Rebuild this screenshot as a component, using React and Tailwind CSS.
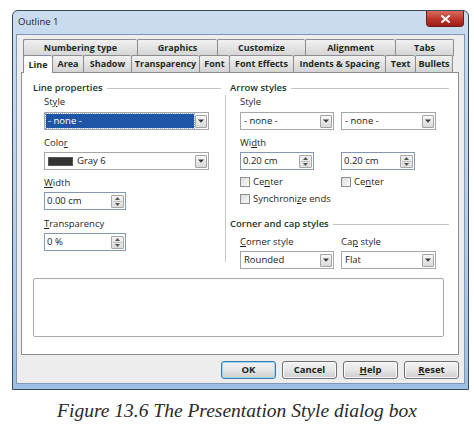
import React from "react";

const UI = "font-['Open_Sans','Noto_Sans',sans-serif]";

function Arrow() {
  return (
    <svg width="6" height="4" viewBox="0 0 6 4">
      <path d="M0 0.5h6L3 3.8z" fill="#3a3a3a" />
    </svg>
  );
}

function DropBtn() {
  return (
    <div className="w-[12px] h-[13px] border border-[#a3a3a3] rounded-[1px] bg-linear-to-b from-[#f7f7f7] to-[#d9d9d9] flex items-center justify-center shrink-0">
      <Arrow />
    </div>
  );
}

function Select({ w, children, highlight }) {
  return (
    <div className={`${w} h-[18px] border border-[#a7a7a7] bg-white flex items-center pl-[1px] pr-[1px] gap-[1px]`}>
      <div
        className={`flex-1 h-[14px] flex items-center gap-[4px] text-[9.5px] leading-none pl-[2px] ${
          highlight ? "bg-[#1f55a6] text-white outline outline-dotted outline-[#8fb0e0]" : "text-[#1a1a1a]"
        }`}
      >
        {children}
      </div>
      <DropBtn />
    </div>
  );
}

function Spin({ w, value }) {
  return (
    <div className={`${w} h-[18px] border border-[#8497b3] bg-white flex items-center pl-[2px] pr-[1px]`}>
      <span className="flex-1 text-[9.5px] leading-none text-[#1a1a1a]">{value}</span>
      <div className="w-[13px] h-[13px] border border-[#a8a8a8] rounded-[1px] bg-linear-to-b from-[#f3f3f3] to-[#dcdcdc] flex flex-col items-center justify-center gap-[1px] shrink-0">
        <svg width="5" height="3" viewBox="0 0 5 3">
          <path d="M0 3h5L2.5 0z" fill="#555" />
        </svg>
        <div className="w-[9px] h-px bg-[#c0c0c0]" />
        <svg width="5" height="3" viewBox="0 0 5 3">
          <path d="M0 0h5L2.5 3z" fill="#555" />
        </svg>
      </div>
    </div>
  );
}

function Label({ children, className = "" }) {
  return (
    <div className={`h-[13px] text-[9.5px] leading-[13px] text-[#1f1f1f] whitespace-nowrap ${className}`}>{children}</div>
  );
}

function Heading({ children, className = "" }) {
  return (
    <div className={`h-[14px] flex items-center ${className}`}>
      <span className="text-[9.5px] font-semibold text-[#22361f] whitespace-nowrap leading-none">{children}</span>
      <div className="flex-1 h-px bg-[#c4c4c4] ml-[4px]" />
    </div>
  );
}

function Check({ children, className = "" }) {
  return (
    <div className={`h-[14px] flex items-center gap-[3px] ${className}`}>
      <div className="w-[10px] h-[10px] border border-[#8e8f8f] bg-linear-to-br from-[#dcdcdc] to-[#fbfbfb]" />
      <span className="text-[9.5px] leading-none text-[#1f1f1f]">{children}</span>
    </div>
  );
}

function Tab({ w, children, selected, last }) {
  return (
    <div
      className={`${w} flex items-center justify-center border-t border-l border-[#8b8d92] rounded-t-[2px] text-[9px] font-bold text-[#1e2b1e] whitespace-nowrap ${
        last ? "border-r" : ""
      } ${selected ? "bg-white h-[18px] relative z-10" : "bg-linear-to-b from-[#f1f1f1] to-[#d4d4d4] h-[17px]"}`}
    >
      {children}
    </div>
  );
}

function Btn({ children, focused }) {
  return (
    <div
      className={`w-[55px] h-[18px] rounded-[3px] border flex items-center justify-center text-[9.5px] font-bold text-[#1e1e1e] bg-linear-to-b from-[#f3f3f3] via-[#e6e6e6] to-[#cdcdcd] ${
        focused ? "border-[#3a7cb0] shadow-[inset_0_0_0_1px_#9fd3f2]" : "border-[#707070] shadow-[inset_0_0_0_1px_#fbfbfb]"
      }`}
    >
      {children}
    </div>
  );
}

export default function App() {
  return (
    <div className={`w-[474px] h-[430px] bg-white ${UI} overflow-hidden`}>
      <div className="pt-[10px] pl-[12px]">
        <div className="w-[457px] h-[380px] border border-[#3a4a5e] rounded-t-[6px] bg-linear-to-b from-[#cadcee] via-[#b9d0e9] to-[#9fc0e3] flex flex-col">
          {/* title bar */}
          <div className="h-[23px] flex items-start justify-between">
            <span className="pl-[5px] pt-[4px] text-[9.5px] text-[#1b1b1b] leading-[13px]">Outline 1</span>
            <div className="mr-[4px] w-[38px] h-[16px] rounded-b-[4px] border border-t-0 border-[#6b1d18] bg-linear-to-b from-[#d86b5f] via-[#c0392e] to-[#9e1c14] flex items-center justify-center">
              <svg width="9" height="8" viewBox="0 0 9 8">
                <path d="M1 1l7 6M8 1l-7 6" stroke="#fff" strokeWidth="2" strokeLinecap="square" />
              </svg>
            </div>
          </div>
          {/* body */}
          <div className="flex-1 mx-[3px] mb-[5px] border border-[#7f98b6] bg-[#ededed] flex flex-col pl-[4px] pr-[5px] pt-[4px]">
            {/* tab rows */}
            <div className="flex pl-[2px] h-[16px]">
              <Tab w="w-[114px]">Numbering type</Tab>
              <Tab w="w-[80px]">Graphics</Tab>
              <Tab w="w-[88px]">Customize</Tab>
              <Tab w="w-[90px]">Alignment</Tab>
              <Tab w="w-[59px]" last>Tabs</Tab>
            </div>
            <div className="flex pl-[2px] h-[17px] items-start">
              <Tab w="w-[29px]" selected>Line</Tab>
              <Tab w="w-[31px]">Area</Tab>
              <Tab w="w-[48px]">Shadow</Tab>
              <Tab w="w-[68px]">Transparency</Tab>
              <Tab w="w-[30px]">Font</Tab>
              <Tab w="w-[64px]">Font Effects</Tab>
              <Tab w="w-[92px]">Indents &amp; Spacing</Tab>
              <Tab w="w-[30px]">Text</Tab>
              <Tab w="w-[38px]" last>Bullets</Tab>
            </div>
            {/* panel */}
            <div className="h-[283px] border border-[#8b8d92] bg-white flex flex-col pt-[8px]">
              <div className="flex items-start pl-[11px] pr-[9px]">
                {/* left column */}
                <div className="w-[192px] flex flex-col pr-[4px]">
                  <Heading>Line properties</Heading>
                  <div className="pl-[11px] flex flex-col">
                    <Label>
                      St<span className="underline">y</span>le
                    </Label>
                    <div className="mt-[4px]">
                      <Select w="w-[165px]" highlight>
                        - none -
                      </Select>
                    </div>
                    <Label className="mt-[6px]">
                      Colo<span className="underline">r</span>
                    </Label>
                    <div className="mt-[3px]">
                      <Select w="w-[165px]">
                        <div className="w-[25px] h-[9px] bg-[#333333] border border-[#555]" />
                        <span>Gray 6</span>
                      </Select>
                    </div>
                    <Label className="mt-[6px]">
                      <span className="underline">W</span>idth
                    </Label>
                    <div className="mt-[3px]">
                      <Spin w="w-[82px]" value="0.00 cm" />
                    </div>
                    <Label className="mt-[7px]">
                      <span className="underline">T</span>ransparency
                    </Label>
                    <div className="mt-[3px]">
                      <Spin w="w-[82px]" value="0 %" />
                    </div>
                  </div>
                </div>
                {/* separator */}
                <div className="w-px h-[167px] mt-[14px] bg-[#c8c8c8] shrink-0" />
                {/* right column */}
                <div className="flex-1 ml-[4px] flex flex-col">
                  <Heading>Arrow styles</Heading>
                  <div className="pl-[10px] flex flex-col">
                    <Label>Style</Label>
                    <div className="mt-[4px] flex gap-[7px]">
                      <Select w="w-[94px]">- none -</Select>
                      <Select w="w-[95px]">- none -</Select>
                    </div>
                    <Label className="mt-[6px]">
                      Wi<span className="underline">d</span>th
                    </Label>
                    <div className="mt-[3px] flex gap-[27px]">
                      <Spin w="w-[74px]" value="0.20 cm" />
                      <Spin w="w-[74px]" value="0.20 cm" />
                    </div>
                    <div className="mt-[5px] flex">
                      <Check className="w-[101px]">
                        Ce<span className="underline">n</span>ter
                      </Check>
                      <Check>
                        Ce<span className="underline">n</span>ter
                      </Check>
                    </div>
                    <Check className="mt-[3px]">
                      Synchroni<span className="underline">z</span>e ends
                    </Check>
                  </div>
                  <Heading className="mt-[11px]">Corner and cap styles</Heading>
                  <div className="pl-[10px] flex flex-col">
                    <div className="mt-[4px] flex">
                      <Label className="w-[101px]">
                        <span className="underline">C</span>orner style
                      </Label>
                      <Label>
                        Ca<span className="underline">p</span> style
                      </Label>
                    </div>
                    <div className="mt-[3px] flex gap-[7px]">
                      <Select w="w-[94px]">Rounded</Select>
                      <Select w="w-[95px]">Flat</Select>
                    </div>
                  </div>
                </div>
              </div>
              {/* preview */}
              <div className="ml-[11px] mt-[9px] w-[411px] h-[59px] border border-[#a9a9a9] rounded-[2px] bg-white" />
            </div>
            {/* buttons */}
            <div className="flex justify-end gap-[6px] mt-[6px] pr-[0px]">
              <Btn focused>OK</Btn>
              <Btn>Cancel</Btn>
              <Btn>
                <span className="underline">H</span>elp
              </Btn>
              <Btn>
                <span className="underline">R</span>eset
              </Btn>
            </div>
          </div>
        </div>
      </div>
      <div className="mt-[9px] text-center font-['Liberation_Serif',serif] italic text-[19.5px] leading-[24px] text-[#2a2a2a]">
        Figure 13.6 The Presentation Style dialog box
      </div>
    </div>
  );
}
